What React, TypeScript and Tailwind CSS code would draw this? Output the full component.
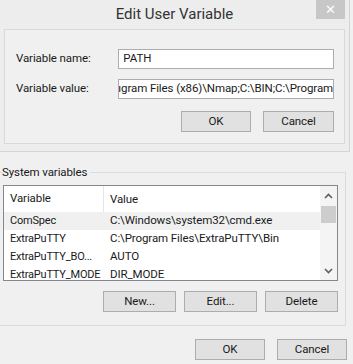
import React from 'react'

const font = { fontFamily: 'Roboto, "Liberation Sans", sans-serif' }

function WinButton({ label, className = '' }: { label: string; className?: string }) {
  return (
    <div
      className={`flex h-[21px] items-center justify-center border border-[#adadad] bg-[#e1e1e1] text-[11.5px] text-[#1a1a1a] ${className}`}
    >
      {label}
    </div>
  )
}

const rows = [
  { name: 'ComSpec', value: 'C:\\Windows\\system32\\cmd.exe', selected: true },
  { name: 'ExtraPuTTY', value: 'C:\\Program Files\\ExtraPuTTY\\Bin' },
  { name: 'ExtraPuTTY_BO...', value: 'AUTO' },
  { name: 'ExtraPuTTY_MODE', value: 'DIR_MODE' },
]

export default function App() {
  return (
    <div className="h-[364px] w-[353px] overflow-hidden bg-[#f0f0f0] text-[#1a1a1a] tracking-[-0.1px]" style={font}>
      {/* Edit User Variable dialog */}
      <div className="relative h-[152px] w-[350px] border-r border-b border-[#d4d4d4] bg-[#ededed]">
        <div className="flex h-[29px] items-center justify-center text-[15px] tracking-normal text-[#333333]">
          Edit User Variable
        </div>
        <div className="absolute top-0 right-[4px] flex h-[19px] w-[29px] items-center justify-center bg-[#c7c7c7] text-[13px] leading-none text-white">
          ✕
        </div>

        <div className="mx-[4px] h-[115px] border border-[#d9d9d9] bg-[#f0f0f0] pl-[11px] pr-[10px] pt-[19px]">
          <div className="flex h-[20px] items-center">
            <span className="w-[103px] text-[11.5px]">Variable name:</span>
            <div className="flex h-[20px] w-[217px] items-center border border-[#abadb3] bg-white px-[4px] text-[11.5px]">
              PATH
            </div>
          </div>
          <div className="mt-[10px] flex h-[20px] items-center">
            <span className="w-[103px] text-[11.5px]">Variable value:</span>
            <div className="flex h-[20px] w-[217px] items-center overflow-hidden whitespace-nowrap border border-[#abadb3] bg-white px-[2px] text-[11.5px]">
              <span className="-ml-[3px]">ıgram Files (x86)\Nmap;C:\BIN;C:\Program Files</span>
            </div>
          </div>
          <div className="mt-[12px] flex justify-end gap-[12px]">
            <WinButton label="OK" className="w-[70px]" />
            <WinButton label="Cancel" className="w-[71px]" />
          </div>
        </div>
      </div>

      {/* System variables group */}
      <div className="relative mt-[20px] h-[154px] w-[346px] border-t border-r border-b border-[#dcdcdc]">
        <span className="absolute -top-[10px] left-[2px] bg-[#f0f0f0] pr-[3px] text-[11.5px] leading-[18px]">
          System variables
        </span>

        <div className="mt-[12px] ml-[3px] flex h-[96px] w-[335px] border border-[#828790] bg-white">
          <div className="flex-1 overflow-hidden">
            <div className="flex h-[26px] items-center text-[11.5px]">
              <span className="w-[99px] pl-[6px]">Variable</span>
              <span className="h-full border-l border-[#e5e5e5] pl-[6px] leading-[26px]">Value</span>
            </div>
            {rows.map((r) => (
              <div
                key={r.name}
                className={`flex h-[18px] items-center whitespace-nowrap text-[11.5px] ${r.selected ? 'bg-[#f0f0f0]' : ''}`}
              >
                <span className="w-[100px] pl-[6px] text-[11px] tracking-[-0.2px]">{r.name}</span>
                <span className="pl-[6px]">{r.value}</span>
              </div>
            ))}
          </div>
          <div className="flex w-[17px] flex-col items-center bg-[#f4f4f4]">
            <svg width="17" height="17" viewBox="0 0 17 17" className="mt-[2px]">
              <path d="M5 10 L8.5 6.5 L12 10" fill="none" stroke="#606060" strokeWidth="1.6" />
            </svg>
            <div className="mt-[1px] h-[17px] w-[15px] bg-[#cdcdcd]" />
            <div className="flex-1" />
            <svg width="17" height="17" viewBox="0 0 17 17" className="mb-[1px]">
              <path d="M5 7 L8.5 10.5 L12 7" fill="none" stroke="#606060" strokeWidth="1.6" />
            </svg>
          </div>
        </div>

        <div className="mt-[10px] flex justify-end gap-[8px] pr-[7px]">
          <WinButton label="New..." className="w-[73px]" />
          <WinButton label="Edit..." className="w-[73px]" />
          <WinButton label="Delete" className="w-[73px]" />
        </div>
      </div>

      <div className="mt-[13px] flex justify-end gap-[12px] pr-[6px]">
        <WinButton label="OK" className="w-[70px]" />
        <WinButton label="Cancel" className="w-[70px]" />
      </div>
    </div>
  )
}
